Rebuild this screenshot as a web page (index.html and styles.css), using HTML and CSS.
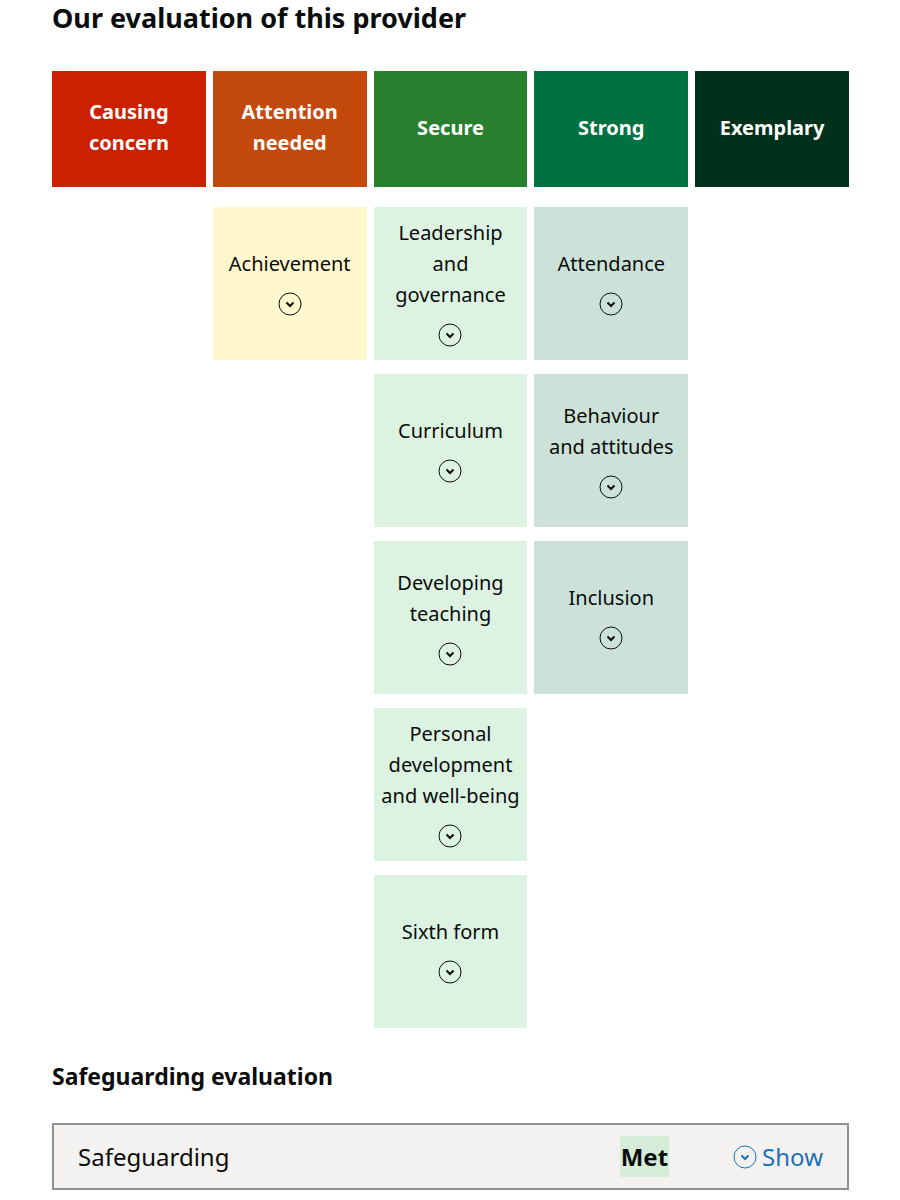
FILE: index.html
```html
<!DOCTYPE html>
<html>
  <head>
    <title>Provider evaluation</title>
    <link rel="stylesheet" href="styles.css">
  </head>
  <body>
    <div class="page">
      <h2 class="heading">Our evaluation of this provider</h2>

      <div class="scale">
        <div class="grade grade-concern">Causing concern</div>
        <div class="grade grade-attention">Attention needed</div>
        <div class="grade grade-secure">Secure</div>
        <div class="grade grade-strong">Strong</div>
        <div class="grade grade-exemplary">Exemplary</div>
      </div>

      <div class="areas">
        <div class="column"></div>

        <div class="column">
          <div class="card card-attention">
            <span class="card-title">Achievement</span>
            <svg class="toggle" viewBox="0 0 24 24"><circle cx="12" cy="12" r="11" /><path d="M8.5 10.5 L12 14 L15.5 10.5" /></svg>
          </div>
        </div>

        <div class="column">
          <div class="card card-secure">
            <span class="card-title">Leadership and governance</span>
            <svg class="toggle" viewBox="0 0 24 24"><circle cx="12" cy="12" r="11" /><path d="M8.5 10.5 L12 14 L15.5 10.5" /></svg>
          </div>
          <div class="card card-secure">
            <span class="card-title">Curriculum</span>
            <svg class="toggle" viewBox="0 0 24 24"><circle cx="12" cy="12" r="11" /><path d="M8.5 10.5 L12 14 L15.5 10.5" /></svg>
          </div>
          <div class="card card-secure">
            <span class="card-title">Developing teaching</span>
            <svg class="toggle" viewBox="0 0 24 24"><circle cx="12" cy="12" r="11" /><path d="M8.5 10.5 L12 14 L15.5 10.5" /></svg>
          </div>
          <div class="card card-secure">
            <span class="card-title">Personal development and well-being</span>
            <svg class="toggle" viewBox="0 0 24 24"><circle cx="12" cy="12" r="11" /><path d="M8.5 10.5 L12 14 L15.5 10.5" /></svg>
          </div>
          <div class="card card-secure">
            <span class="card-title">Sixth form</span>
            <svg class="toggle" viewBox="0 0 24 24"><circle cx="12" cy="12" r="11" /><path d="M8.5 10.5 L12 14 L15.5 10.5" /></svg>
          </div>
        </div>

        <div class="column">
          <div class="card card-strong">
            <span class="card-title">Attendance</span>
            <svg class="toggle" viewBox="0 0 24 24"><circle cx="12" cy="12" r="11" /><path d="M8.5 10.5 L12 14 L15.5 10.5" /></svg>
          </div>
          <div class="card card-strong">
            <span class="card-title">Behaviour and attitudes</span>
            <svg class="toggle" viewBox="0 0 24 24"><circle cx="12" cy="12" r="11" /><path d="M8.5 10.5 L12 14 L15.5 10.5" /></svg>
          </div>
          <div class="card card-strong">
            <span class="card-title">Inclusion</span>
            <svg class="toggle" viewBox="0 0 24 24"><circle cx="12" cy="12" r="11" /><path d="M8.5 10.5 L12 14 L15.5 10.5" /></svg>
          </div>
        </div>

        <div class="column"></div>
      </div>

      <h3 class="subheading">Safeguarding evaluation</h3>

      <div class="safeguarding">
        <span class="safeguarding-label">Safeguarding</span>
        <span class="safeguarding-result">Met</span>
        <a class="show-link" href="#">
          <svg class="toggle toggle-link" viewBox="0 0 24 24"><circle cx="12" cy="12" r="11" /><path d="M8.5 10.5 L12 14 L15.5 10.5" /></svg>
          Show
        </a>
      </div>
    </div>
  </body>
</html>
```

FILE: styles.css
```css
body {
  margin: 0;
  font-family: "Noto Sans", Arial, sans-serif;
  color: #0b0c0c;
  background: #fff;
}

.page {
  width: 797px;
  margin-left: 52px;
}

.heading {
  margin: 0;
  padding-top: 1px;
  font-size: 27px;
  line-height: 34px;
  font-weight: 700;
}

/* grade scale across the top */
.scale {
  display: grid;
  grid-template-columns: repeat(5, 1fr);
  gap: 7px;
  margin-top: 36px;
}

.grade {
  height: 116px;
  display: flex;
  align-items: center;
  justify-content: center;
  text-align: center;
  padding: 0 24px 4px;
  box-sizing: border-box;
  color: #fff;
  font-weight: 700;
  font-size: 20px;
  line-height: 31px;
}

.grade-concern { background-color: #cc2100; }
.grade-attention { background-color: #c4490c; }
.grade-secure { background-color: #28802f; }
.grade-strong { background-color: #007140; }
.grade-exemplary { background-color: #01311a; }

/* evaluation areas sit under their grade */
.areas {
  display: grid;
  grid-template-columns: repeat(5, 1fr);
  gap: 7px;
  margin-top: 20px;
}

.column {
  display: flex;
  flex-direction: column;
  gap: 14px;
}

.card {
  height: 153px;
  display: flex;
  flex-direction: column;
  align-items: center;
  justify-content: center;
  padding: 0 6px 3px;
  box-sizing: border-box;
  text-align: center;
  font-size: 20px;
  line-height: 31px;
}

.card-title {
  text-wrap: balance;
}

.card-attention { background-color: #fff7cd; }
.card-secure { background-color: #ddf3e1; }
.card-strong { background-color: #cce2d8; }

.toggle {
  flex-shrink: 0;
  width: 24px;
  height: 24px;
  margin-top: 13px;
  fill: none;
  stroke: #0b0c0c;
}

.toggle circle {
  stroke-width: 1;
}

.toggle path {
  stroke-width: 2;
}

.subheading {
  margin: 33px 0 0;
  font-size: 23px;
  line-height: 30px;
  font-weight: 700;
}

.safeguarding {
  display: flex;
  align-items: center;
  margin-top: 32px;
  height: 67px;
  box-sizing: border-box;
  border: 2px solid #8f9091;
  background-color: #f3f2f1;
  padding: 0 24px;
  font-size: 24px;
}

.safeguarding-label {
  flex: 1;
}

.safeguarding-result {
  font-weight: 700;
  background-color: #d5ecd9;
  padding: 4px 1px;
  line-height: 33px;
}

.show-link {
  display: flex;
  align-items: center;
  gap: 5px;
  margin-left: 64px;
  color: #1d70b8;
  text-decoration: none;
}

.toggle-link {
  margin-top: 0;
  stroke: #1d70b8;
}
```
